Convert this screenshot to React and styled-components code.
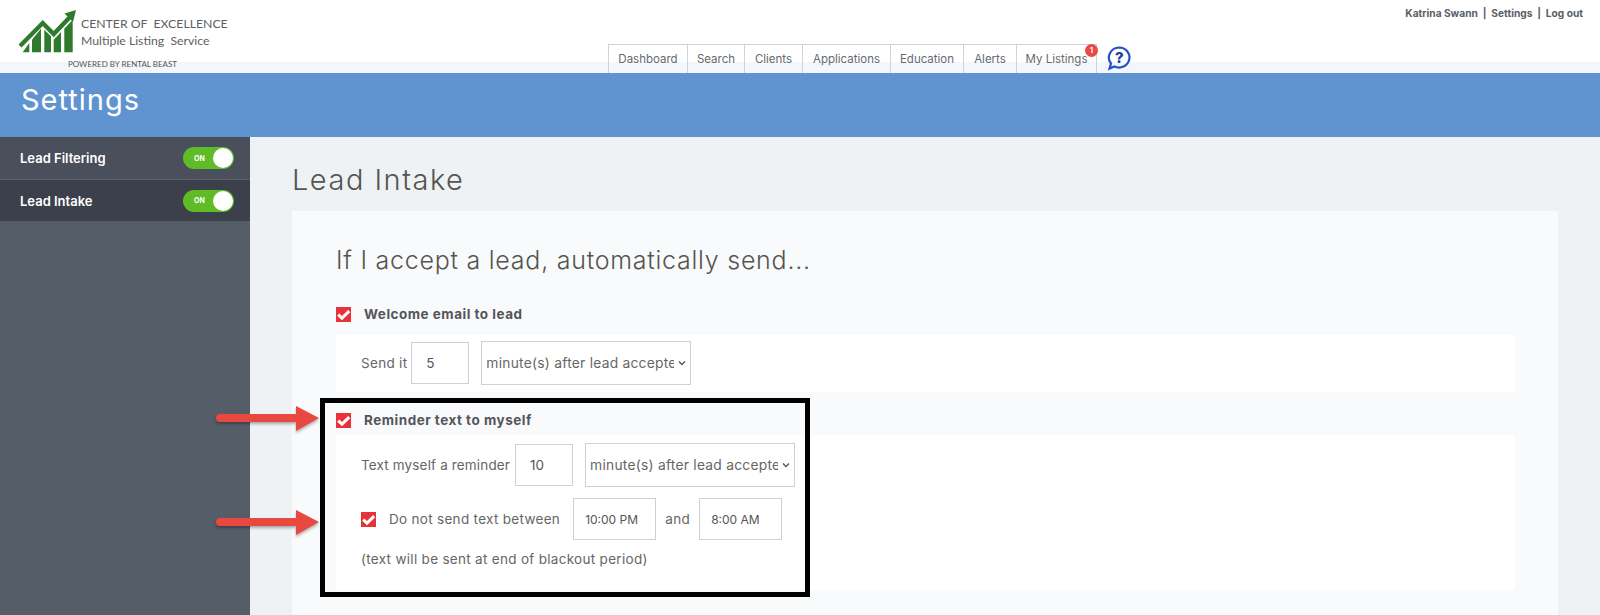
import React from 'react';
import styled, { createGlobalStyle } from 'styled-components';

const GlobalStyle = createGlobalStyle`
  html, body {
    margin: 0;
    height: 615px;
    overflow: hidden;
    background: #eef2f5;
    font-family: "Inter", "Open Sans", sans-serif;
    color: #5a5a5a;
  }
  * { box-sizing: border-box; }
`;

const Page = styled.div`
  position: relative;
  width: 1600px;
  height: 615px;
  overflow: hidden;
`;

const Header = styled.header`
  position: relative;
  height: 73px;
  display: flex;
  background: linear-gradient(#fff 0, #fff 62px, #f3f6fa 62px);
`;

const LogoArea = styled.div`
  width: 608px;
  flex: none;
  padding: 10px 0 0 19px;
  display: grid;
  grid-template-columns: 57px auto;
  grid-template-rows: 45px auto;
  column-gap: 5px;
  align-content: start;
  justify-content: start;
`;

const LogoText = styled.div`
  font-family: "Lato", sans-serif;
  color: #5b6064;
  padding-top: 5px;
  div { font-size: 12.25px; line-height: 17px; white-space: pre; }
`;

const Powered = styled.div`
  grid-column: 1 / 3;
  font-family: "Lato", sans-serif;
  font-size: 8px;
  margin: 4px 0 0 49px;
  color: #555;
`;

const UserLinks = styled.div`
  position: absolute;
  top: 7px;
  right: 17px;
  font-size: 10.2px;
  font-weight: 700;
  color: #5a6068;
`;

const Nav = styled.nav`
  display: flex;
  align-items: flex-end;
  height: 73px;
`;

const Tab = styled.a`
  position: relative;
  width: ${p => p.$w}px;
  height: 29px;
  display: flex;
  align-items: center;
  justify-content: center;
  border: 1px solid #cfd2d6;
  border-left-width: ${p => (p.$first ? 1 : 0)}px;
  border-bottom: 0;
  font-size: 11.5px;
  color: #666a6e;
`;

const Badge = styled.span`
  position: absolute;
  top: -1px;
  right: -2px;
  width: 13px;
  height: 13px;
  border-radius: 50%;
  background: #e84a45;
  color: #fff;
  font-size: 7px;
  font-weight: 700;
  display: flex;
  align-items: center;
  justify-content: center;
`;

const Help = styled.svg`
  width: 26px;
  height: 26px;
  margin: 0 0 2px 9px;
`;

const Banner = styled.div`
  height: 64px;
  background: #5f94d0;
  color: #fff;
  font-size: 29px;
  line-height: 36px;
  padding: 9px 0 0 21px;
  letter-spacing: 1px;
  font-weight: 400;
`;

const Body = styled.div`
  display: flex;
  height: 478px;
`;

const Sidebar = styled.aside`
  width: 250px;
  flex: none;
  background: #555d68;
`;

const SideItem = styled.div`
  height: ${p => p.$h}px;
  display: flex;
  align-items: center;
  justify-content: space-between;
  padding: 0 16px 0 20px;
  background: ${p => p.$bg};
  border-bottom: ${p => (p.$line ? '1px solid #5a616b' : '0')};
  color: #fff;
  font-size: 13px;
  font-weight: 600;
`;

const Toggle = styled.div`
  width: 51px;
  height: 22px;
  border-radius: 11px;
  background: #5fbb26;
  display: flex;
  align-items: center;
  justify-content: space-between;
  padding: 0 1px 0 11px;
  font-size: 7px;
  font-weight: 700;
  i { width: 20px; height: 20px; border-radius: 50%; background: #fff; }
`;

const Main = styled.main`
  flex: 1;
  padding: 25px 42px 0 42px;
`;

const PageTitle = styled.h1`
  margin: 0 0 13px;
  font-size: 29px;
  line-height: 36px;
  font-weight: 300;
  letter-spacing: 1.5px;
  color: #55554f;
`;

const Card = styled.section`
  background: #f8fafc;
  padding: 34px 43px 0 44px;
  height: 420px;
`;

const CardTitle = styled.h2`
  margin: 0 0 25px;
  font-size: 25px;
  line-height: 30px;
  font-weight: 300;
  letter-spacing: 0.75px;
  color: #55554f;
`;

const CheckRow = styled.div`
  display: flex;
  align-items: center;
  gap: 13px;
  height: 28px;
  margin-bottom: ${p => p.$mb || 0}px;
  font-size: 13.5px;
  font-weight: 700;
  letter-spacing: 0.5px;
  color: #55555a;
`;

const Box = styled.span`
  width: 15px;
  height: 15px;
  flex: none;
  background: #e8323a;
  display: flex;
`;

const Panel = styled.div`
  background: #fff;
  padding: ${p => p.$top}px 0 0 25px;
  height: ${p => p.$h}px;
  margin-bottom: ${p => p.$mb || 0}px;
  font-size: 13.5px;
  letter-spacing: 0.3px;
  color: #666;
`;

const FormRow = styled.div`
  display: flex;
  align-items: center;
  height: 42px;
  letter-spacing: ${p => p.$ls || 0.3}px;
  margin-bottom: ${p => p.$mb || 0}px;
`;

const Field = styled.div`
  width: ${p => p.$w}px;
  height: 42px;
  flex: none;
  border: 1px solid #cfd2d4;
  background: #fff;
  display: flex;
  align-items: center;
  padding-left: ${p => p.$pad}px;
  margin-left: ${p => p.$ml || 0}px;
  font-size: ${p => p.$fs || 13.5}px;
  letter-spacing: 0;
  color: #555;
`;

const Select = styled.div`
  width: 210px;
  height: 44px;
  flex: none;
  border: 1px solid #cfd2d4;
  background: #fff;
  display: flex;
  align-items: center;
  justify-content: space-between;
  padding: 0 4px 0 4px;
  margin-left: 12px;
  font-size: 13.8px;
  letter-spacing: 0.25px;
  color: #666;
  white-space: nowrap;
  span { width: 188px; overflow: hidden; }
`;

const BoxLabel = styled.span`
  margin-left: 13px;
`;

const AndLabel = styled.span`
  width: 43px;
  flex: none;
  text-align: center;
`;

const Note = styled.div`
  margin-top: 10px;
  line-height: 18px;
`;

const Annotation = styled.div`
  position: absolute;
  left: 320px;
  top: 398px;
  width: 490px;
  height: 199px;
  border: 5px solid #000;
`;

const Arrow = styled.svg`
  position: absolute;
  left: 214px;
  top: ${p => p.$top}px;
  width: 108px;
  height: 32px;
  filter: drop-shadow(0 2px 1.5px rgba(0, 0, 0, 0.3));
`;

const Check = () => (
  <svg width="15" height="15" viewBox="0 0 15 15">
    <path d="M2.2 7.6 L6 11.2 L13.2 4.2" fill="none" stroke="#fff" strokeWidth="3" />
  </svg>
);

const Chevron = () => (
  <svg width="8" height="6" viewBox="0 0 8 6">
    <path d="M1 1.5 L4 4.5 L7 1.5" fill="none" stroke="#555" strokeWidth="1.3" />
  </svg>
);

const ArrowShape = ({ top }) => (
  <Arrow $top={top} viewBox="0 0 108 32">
    <path d="M6 11 H82 V3 L105 15 L82 28 V19 H6 a4 4 0 0 1 0 -8 Z" fill="#e8483f" />
  </Arrow>
);

const tabs = [
  ['Dashboard', 80],
  ['Search', 57],
  ['Clients', 58],
  ['Applications', 88],
  ['Education', 73],
  ['Alerts', 53],
];

export default function App() {
  return (
    <Page>
      <GlobalStyle />
      <Header>
        <LogoArea>
          <svg width="57" height="45" viewBox="0 0 57 45">
            <g fill="#2f7a2c">
              <path d="M3.7 42.3 L10.3 33 V42.3 Z" />
              <path d="M13 42.3 V29.7 L22 18.7 V42.3 Z" />
              <path d="M25.3 42.3 V19.7 L32 26.3 V42.3 Z" />
              <path d="M34.7 42.3 V29.7 L42 22 V42.3 Z" />
              <path d="M45.3 42.3 V18.7 L53.7 9.7 V42.3 Z" />
              <path d="M57 0 L45.5 3.5 L54 12 Z" />
            </g>
            <path d="M1 36 L23.7 13 L34.7 24 L51 7" fill="none" stroke="#2f7a2c" strokeWidth="4.4" />
          </svg>
          <LogoText>
            <div>CENTER OF  EXCELLENCE</div>
            <div>Multiple Listing  Service</div>
          </LogoText>
          <Powered>POWERED BY RENTAL BEAST</Powered>
        </LogoArea>
        <Nav>
          {tabs.map(([label, w], i) => (
            <Tab key={label} $w={w} $first={i === 0}>{label}</Tab>
          ))}
          <Tab $w={80}>
            My Listings
            <Badge>1</Badge>
          </Tab>
          <Help viewBox="0 0 26 26">
            <path d="M13 2.5 a10.5 10 0 1 1 -4.6 19 L3.5 23.5 L5 18.5 A10.5 10 0 0 1 13 2.5 Z" fill="none" stroke="#2450c8" strokeWidth="2.2" />
            <text x="13.4" y="18" textAnchor="middle" fontSize="15" fontWeight="800" fill="#1e3f9e" fontFamily="Inter">?</text>
          </Help>
        </Nav>
        <UserLinks>Katrina Swann&nbsp; |&nbsp; Settings&nbsp; |&nbsp; Log out</UserLinks>
      </Header>
      <Banner>Settings</Banner>
      <Body>
        <Sidebar>
          <SideItem $h={43} $bg="#4a505b" $line>
            Lead Filtering
            <Toggle>ON<i /></Toggle>
          </SideItem>
          <SideItem $h={41} $bg="#3c404a">
            Lead Intake
            <Toggle>ON<i /></Toggle>
          </SideItem>
        </Sidebar>
        <Main>
          <PageTitle>Lead Intake</PageTitle>
          <Card>
            <CardTitle>If I accept a lead, automatically send...</CardTitle>
            <CheckRow $mb={7}>
              <Box><Check /></Box>
              Welcome email to lead
            </CheckRow>
            <Panel $h={57} $mb={14} $top={7}>
              <FormRow>
                Send it
                <Field $w={58} $pad={14} $ml={4}>5</Field>
                <Select><span>minute(s) after lead accepted</span><Chevron /></Select>
              </FormRow>
            </Panel>
            <CheckRow $mb={1}>
              <Box><Check /></Box>
              Reminder text to myself
            </CheckRow>
            <Panel $h={155} $top={9}>
              <FormRow $mb={12} $ls={0.15}>
                Text myself a reminder
                <Field $w={58} $pad={14} $ml={5}>10</Field>
                <Select><span>minute(s) after lead accepted</span><Chevron /></Select>
              </FormRow>
              <FormRow>
                <Box><Check /></Box>
                <BoxLabel>Do not send text between</BoxLabel>
                <Field $w={83} $pad={11} $fs={12} $ml={13}>10:00 PM</Field>
                <AndLabel>and</AndLabel>
                <Field $w={83} $pad={11} $fs={12}>8:00 AM</Field>
              </FormRow>
              <Note>(text will be sent at end of blackout period)</Note>
            </Panel>
          </Card>
        </Main>
      </Body>
      <Annotation />
      <ArrowShape top={403} />
      <ArrowShape top={507} />
    </Page>
  );
}
